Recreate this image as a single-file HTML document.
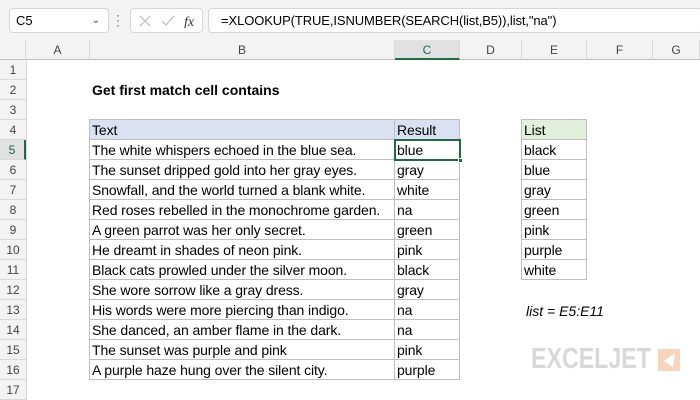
<!DOCTYPE html>
<html><head><style>
body{margin:0;width:700px;height:400px;overflow:hidden;background:#fff;font-family:"Liberation Sans",Arial,sans-serif;position:relative}
.a{position:absolute;box-sizing:border-box}
.t{font-size:14px;color:#000;white-space:nowrap}
.rh{position:absolute;left:0;width:26px;height:20px;font-size:12px;color:#444;text-align:center;line-height:20px;border-bottom:1px solid #dadada;background:#f3f3f3;box-sizing:border-box}
.ch{position:absolute;top:40px;height:20px;font-size:12px;color:#444;text-align:center;line-height:20px;border-right:1px solid #dadada;background:#f3f3f3;box-sizing:border-box;border-bottom:1px solid #bcbcbc}
.c{position:absolute;line-height:20px;font-size:14px;padding-left:2px;border:1px solid #bfbfbf;box-sizing:border-box;white-space:nowrap;margin:-1px 0 0 -1px;height:21px;letter-spacing:-0.1px}
</style></head><body>
<div class="a" style="left:0;top:0;width:700px;height:40px;background:#f3f3f3"></div>
<div class="a" style="left:9px;top:8px;width:100px;height:25px;background:#fff;border:1px solid #d6d6d6;border-radius:4px;font-size:13px;line-height:23px;padding-left:6px">C5<span style="position:absolute;right:8px;top:0;font-size:10px;color:#444">&#8964;</span></div>
<div class="a" style="left:116px;top:13px;width:4px;height:14px;font-size:12px;color:#555;line-height:5px">·<br>·<br>·</div>
<div class="a" style="left:130px;top:8px;width:73px;height:25px;background:#fff;border:1px solid #d6d6d6;border-radius:4px"></div>
<svg class="a" style="left:138px;top:14px" width="62" height="14"><path d="M2 2L12 12M12 2L2 12" stroke="#bbb" stroke-width="1.2" fill="none"/><path d="M24 7l4 4 8-9" stroke="#bbb" stroke-width="1.2" fill="none"/><text x="46" y="12" font-family="Liberation Serif" font-style="italic" font-size="14" fill="#333">fx</text></svg>
<div class="a" style="left:208px;top:8px;width:495px;height:25px;background:#fff;border:1px solid #d6d6d6;border-radius:4px;font-size:13px;line-height:23px;padding-left:12px;letter-spacing:-0.1px">=XLOOKUP(TRUE,ISNUMBER(SEARCH(list,B5)),list,"na")</div>
<div class="ch" style="left:0;width:26px"></div>
<div class="ch" style="left:26px;width:64px">A</div>
<div class="ch" style="left:90px;width:305px">B</div>
<div class="ch" style="left:395px;width:65px;background:#e1e1e1;color:#1e6b41;border-bottom:2px solid #1e6b41">C</div>
<div class="ch" style="left:460px;width:62px">D</div>
<div class="ch" style="left:522px;width:65px">E</div>
<div class="ch" style="left:587px;width:66px">F</div>
<div class="ch" style="left:653px;width:47px">G</div>
<div class="rh" style="top:60px">1</div><div class="rh" style="top:80px">2</div><div class="rh" style="top:100px">3</div><div class="rh" style="top:120px">4</div>
<div class="rh" style="top:140px;background:#e1e1e1;color:#1e6b41;border-right:2px solid #1e6b41">5</div>
<div class="rh" style="top:160px">6</div><div class="rh" style="top:180px">7</div><div class="rh" style="top:200px">8</div><div class="rh" style="top:220px">9</div><div class="rh" style="top:240px">10</div><div class="rh" style="top:260px">11</div><div class="rh" style="top:280px">12</div><div class="rh" style="top:300px">13</div><div class="rh" style="top:320px">14</div><div class="rh" style="top:340px">15</div><div class="rh" style="top:360px">16</div><div class="rh" style="top:380px">17</div>
<div class="a" style="left:26px;top:60px;width:1px;height:340px;background:#dadada"></div>
<div class="a t" style="left:92px;top:82px;font-weight:bold">Get first match cell contains</div>

<div class="c" style="left:90px;top:120px;width:306px;background:#d9e1f2">Text</div>
<div class="c" style="left:395px;top:120px;width:66px;background:#d9e1f2">Result</div>
<div class="c" style="left:90px;top:140px;width:306px">The white whispers echoed in the blue sea.</div><div class="c" style="left:395px;top:140px;width:66px">blue</div>
<div class="c" style="left:90px;top:160px;width:306px">The sunset dripped gold into her gray eyes.</div><div class="c" style="left:395px;top:160px;width:66px">gray</div>
<div class="c" style="left:90px;top:180px;width:306px">Snowfall, and the world turned a blank white.</div><div class="c" style="left:395px;top:180px;width:66px">white</div>
<div class="c" style="left:90px;top:200px;width:306px">Red roses rebelled in the monochrome garden.</div><div class="c" style="left:395px;top:200px;width:66px">na</div>
<div class="c" style="left:90px;top:220px;width:306px">A green parrot was her only secret.</div><div class="c" style="left:395px;top:220px;width:66px">green</div>
<div class="c" style="left:90px;top:240px;width:306px">He dreamt in shades of neon pink.</div><div class="c" style="left:395px;top:240px;width:66px">pink</div>
<div class="c" style="left:90px;top:260px;width:306px">Black cats prowled under the silver moon.</div><div class="c" style="left:395px;top:260px;width:66px">black</div>
<div class="c" style="left:90px;top:280px;width:306px">She wore sorrow like a gray dress.</div><div class="c" style="left:395px;top:280px;width:66px">gray</div>
<div class="c" style="left:90px;top:300px;width:306px">His words were more piercing than indigo.</div><div class="c" style="left:395px;top:300px;width:66px">na</div>
<div class="c" style="left:90px;top:320px;width:306px">She danced, an amber flame in the dark.</div><div class="c" style="left:395px;top:320px;width:66px">na</div>
<div class="c" style="left:90px;top:340px;width:306px">The sunset was purple and pink</div><div class="c" style="left:395px;top:340px;width:66px">pink</div>
<div class="c" style="left:90px;top:360px;width:306px">A purple haze hung over the silent city.</div><div class="c" style="left:395px;top:360px;width:66px">purple</div>
<div class="a" style="left:394px;top:139px;width:67px;height:22px;border:2px solid #1e6b41"></div>
<div class="a" style="left:458px;top:158px;width:5px;height:5px;background:#1e6b41;border:1px solid #fff"></div>

<div class="c" style="left:522px;top:120px;width:66px;background:#e2efda">List</div>
<div class="c" style="left:522px;top:140px;width:66px">black</div>
<div class="c" style="left:522px;top:160px;width:66px">blue</div>
<div class="c" style="left:522px;top:180px;width:66px">gray</div>
<div class="c" style="left:522px;top:200px;width:66px">green</div>
<div class="c" style="left:522px;top:220px;width:66px">pink</div>
<div class="c" style="left:522px;top:240px;width:66px">purple</div>
<div class="c" style="left:522px;top:260px;width:66px">white</div>
<div class="a t" style="left:526px;top:303px;font-style:italic">list = E5:E11</div>
<div class="a" style="left:531px;top:343px;font-size:29px;font-weight:bold;color:#d8d8d8;line-height:32px;white-space:nowrap;transform:scaleX(0.8);transform-origin:left top">EXCELJET</div>
<div class="a" style="left:658px;top:349px;width:22px;height:22px;background:#f7d5bd"></div>
<svg class="a" style="left:658px;top:349px" width="22" height="22"><path d="M17 4L6 12l9 6z" fill="#fff"/></svg>
</body></html>
